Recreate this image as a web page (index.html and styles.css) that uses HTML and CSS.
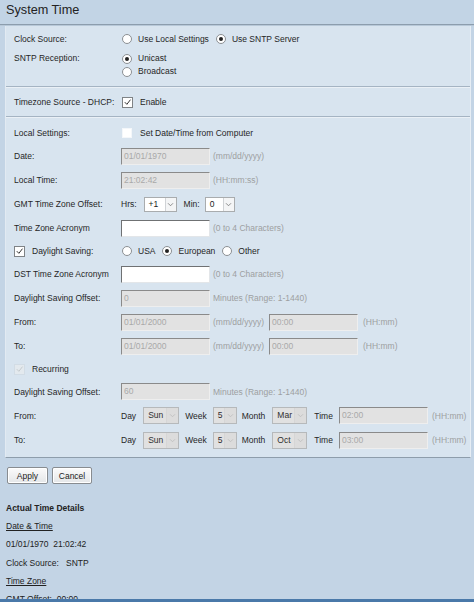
FILE: index.html
```html
<!DOCTYPE html>
<html>
<head>
<meta charset="utf-8">
<title>System Time</title>
<link rel="stylesheet" href="styles.css">
</head>
<body>
<div class="titlebar"><h1 class="title">System Time</h1></div>

<div class="panel">
  <div class="section s1">
    <div class="row h18">
      <div class="label">Clock Source:</div>
      <div class="ctl">
        <span class="opt"><span class="radio"></span>Use Local Settings</span>
        <span class="opt"><span class="radio on"></span>Use SNTP Server</span>
      </div>
    </div>
    <div class="row top">
      <div class="label lh13">SNTP Reception:</div>
      <div class="ctl col">
        <span class="opt lh13"><span class="radio on"></span>Unicast</span>
        <span class="opt lh13"><span class="radio"></span>Broadcast</span>
      </div>
    </div>
  </div>

  <div class="section s2">
    <div class="row h14">
      <div class="label">Timezone Source - DHCP:</div>
      <div class="ctl">
        <span class="opt"><span class="check"><svg viewBox="0 0 10 10" width="10" height="10"><path d="M2 5.2 L4.3 7.6 L8.3 2.4" fill="none" stroke="#333" stroke-width="1.1"/></svg></span>Enable</span>
      </div>
    </div>
  </div>

  <div class="section s3">
    <div class="row h22">
      <div class="label">Local Settings:</div>
      <div class="ctl">
        <span class="opt"><span class="check blank"></span>Set Date/Time from Computer</span>
      </div>
    </div>
    <div class="row h24">
      <div class="label">Date:</div>
      <div class="ctl"><span class="field dis">01/01/1970</span><span class="hint">(mm/dd/yyyy)</span></div>
    </div>
    <div class="row h24">
      <div class="label">Local Time:</div>
      <div class="ctl"><span class="field dis">21:02:42</span><span class="hint">(HH:mm:ss)</span></div>
    </div>
    <div class="row h24">
      <div class="label">GMT Time Zone Offset:</div>
      <div class="ctl">
        <span class="word w7">Hrs:</span>
        <span class="select w-hrs"><span class="val">+1</span><span class="arrow"><svg viewBox="0 0 8 6" width="7" height="5"><path d="M1 1.5 L4 4.5 L7 1.5" fill="none" stroke="#777" stroke-width="1"/></svg></span></span>
        <span class="word ml7">Min:</span>
        <span class="select w-min"><span class="val">0</span><span class="arrow"><svg viewBox="0 0 8 6" width="7" height="5"><path d="M1 1.5 L4 4.5 L7 1.5" fill="none" stroke="#777" stroke-width="1"/></svg></span></span>
      </div>
    </div>
    <div class="row h24">
      <div class="label">Time Zone Acronym</div>
      <div class="ctl"><span class="field"></span><span class="hint">(0 to 4 Characters)</span></div>
    </div>
    <div class="row h22">
      <div class="label lab-check"><span class="check"><svg viewBox="0 0 10 10" width="10" height="10"><path d="M2 5.2 L4.3 7.6 L8.3 2.4" fill="none" stroke="#333" stroke-width="1.1"/></svg></span>Daylight Saving:</div>
      <div class="ctl">
        <span class="opt"><span class="radio"></span>USA</span>
        <span class="opt"><span class="radio on"></span>European</span>
        <span class="opt"><span class="radio"></span>Other</span>
      </div>
    </div>
    <div class="row h24">
      <div class="label">DST Time Zone Acronym</div>
      <div class="ctl"><span class="field"></span><span class="hint">(0 to 4 Characters)</span></div>
    </div>
    <div class="row h24">
      <div class="label">Daylight Saving Offset:</div>
      <div class="ctl"><span class="field dis">0</span><span class="hint">Minutes (Range: 1-1440)</span></div>
    </div>
    <div class="row h24">
      <div class="label">From:</div>
      <div class="ctl"><span class="field dis">01/01/2000</span><span class="hint">(mm/dd/yyyy)</span><span class="field dis ml5">00:00</span><span class="hint ml5">(HH:mm)</span></div>
    </div>
    <div class="row h24">
      <div class="label">To:</div>
      <div class="ctl"><span class="field dis">01/01/2000</span><span class="hint">(mm/dd/yyyy)</span><span class="field dis ml5">00:00</span><span class="hint ml5">(HH:mm)</span></div>
    </div>
    <div class="row h22">
      <div class="label lab-check"><span class="check faded"><svg viewBox="0 0 10 10" width="10" height="10"><path d="M2 5.2 L4.3 7.6 L8.3 2.4" fill="none" stroke="#c4c9cc" stroke-width="1.1"/></svg></span>Recurring</div>
    </div>
    <div class="row h23">
      <div class="label">Daylight Saving Offset:</div>
      <div class="ctl"><span class="field dis">60</span><span class="hint">Minutes (Range: 1-1440)</span></div>
    </div>
    <div class="row h25">
      <div class="label">From:</div>
      <div class="ctl">
        <span class="word w7">Day</span>
        <span class="select dsel w-day"><span class="val">Sun</span><span class="arrow"><svg viewBox="0 0 8 6" width="7" height="5"><path d="M1 1.5 L4 4.5 L7 1.5" fill="none" stroke="#bdbdbd" stroke-width="1"/></svg></span></span>
        <span class="word w6 ml6">Week</span>
        <span class="select dsel w-week"><span class="val">5</span><span class="arrow"><svg viewBox="0 0 8 6" width="7" height="5"><path d="M1 1.5 L4 4.5 L7 1.5" fill="none" stroke="#bdbdbd" stroke-width="1"/></svg></span></span>
        <span class="word w7 ml5">Month</span>
        <span class="select dsel w-month"><span class="val">Mar</span><span class="arrow"><svg viewBox="0 0 8 6" width="7" height="5"><path d="M1 1.5 L4 4.5 L7 1.5" fill="none" stroke="#bdbdbd" stroke-width="1"/></svg></span></span>
        <span class="word w6 ml7">Time</span>
        <span class="field dis">02:00</span><span class="hint ml4">(HH:mm)</span>
      </div>
    </div>
    <div class="row h24">
      <div class="label">To:</div>
      <div class="ctl">
        <span class="word w7">Day</span>
        <span class="select dsel w-day"><span class="val">Sun</span><span class="arrow"><svg viewBox="0 0 8 6" width="7" height="5"><path d="M1 1.5 L4 4.5 L7 1.5" fill="none" stroke="#bdbdbd" stroke-width="1"/></svg></span></span>
        <span class="word w6 ml6">Week</span>
        <span class="select dsel w-week"><span class="val">5</span><span class="arrow"><svg viewBox="0 0 8 6" width="7" height="5"><path d="M1 1.5 L4 4.5 L7 1.5" fill="none" stroke="#bdbdbd" stroke-width="1"/></svg></span></span>
        <span class="word w7 ml5">Month</span>
        <span class="select dsel w-month"><span class="val">Oct</span><span class="arrow"><svg viewBox="0 0 8 6" width="7" height="5"><path d="M1 1.5 L4 4.5 L7 1.5" fill="none" stroke="#bdbdbd" stroke-width="1"/></svg></span></span>
        <span class="word w6 ml7">Time</span>
        <span class="field dis">03:00</span><span class="hint ml4">(HH:mm)</span>
      </div>
    </div>
  </div>
</div>

<div class="buttons">
  <button class="btn w-apply">Apply</button>
  <button class="btn w-cancel">Cancel</button>
</div>

<div class="details">
  <div class="dline bold">Actual Time Details</div>
  <div class="dline u">Date &amp; Time</div>
  <div class="dline">01/01/1970&nbsp;&nbsp;21:02:42</div>
  <div class="dline">Clock Source:&nbsp;&nbsp;&nbsp;SNTP</div>
  <div class="dline u">Time Zone</div>
  <div class="dline">GMT Offset:&nbsp;&nbsp;00:00</div>
</div>

<div class="bottombar"></div>
</body>
</html>
```

FILE: styles.css
```css
html, body {
  margin: 0;
  padding: 0;
}
body {
  background: #c3d4e5;
  font-family: "Liberation Sans", Arial, sans-serif;
  font-size: 8.5px;
  color: #262626;
  height: 602px;
  overflow: hidden;
}
.titlebar {
  height: 24px;
  border-bottom: 1px solid #8c9dad;
  box-shadow: 0 1px 0 #b7c8d8;
  background: #c2d4e5;
}
.title {
  margin: 0;
  padding-left: 6px;
  font-size: 12.7px;
  font-weight: normal;
  line-height: 21px;
  color: #222;
}
.panel {
  margin: 1px 3px 0 5px;
  background: #d8e4ef;
  border-left: 1px solid #e2eaf2;
  border-right: 1px solid #e6edf4;
  border-bottom: 1px solid #8e9dab;
}
.section {
  padding-left: 8px;
  padding-right: 4px;
}
.s1 {
  padding-top: 4px;
  padding-bottom: 8px;
  border-bottom: 1px solid #a5b4c3;
}
.s2 {
  padding-top: 7px;
  padding-bottom: 7px;
  border-top: 1px solid #eaf0f6;
  border-bottom: 1px solid #a5b4c3;
}
.s3 {
  padding-top: 4px;
  padding-bottom: 5px;
  border-top: 1px solid #eaf0f6;
}
.row {
  display: flex;
  align-items: center;
}
.row.top {
  align-items: flex-start;
  margin-top: 4px;
}
.h14 { height: 14px; }
.h18 { height: 18px; }
.h22 { height: 22px; }
.h23 { height: 23px; }
.h24 { height: 24px; }
.h25 { height: 25px; }
.lh13 { line-height: 13px; height: 13px; }
.label {
  width: 107px;
  flex: none;
  white-space: nowrap;
  display: flex;
  align-items: center;
}
.lab-check .check {
  margin-left: 0;
  margin-right: 7px;
}
.ctl {
  display: flex;
  align-items: center;
  white-space: nowrap;
}
.ctl.col {
  flex-direction: column;
  align-items: flex-start;
}
.opt {
  display: inline-flex;
  align-items: center;
  margin-right: 6px;
}
.radio {
  width: 8px;
  height: 8px;
  border: 1px solid #8b8f93;
  border-radius: 50%;
  background: #fff;
  margin-left: 1px;
  margin-right: 6px;
  position: relative;
  flex: none;
}
.radio.on::after {
  content: "";
  position: absolute;
  left: 2px;
  top: 2px;
  width: 4px;
  height: 4px;
  border-radius: 50%;
  background: #222;
}
.check {
  width: 9px;
  height: 9px;
  border: 1px solid #7f8386;
  background: #fff;
  margin-left: 1px;
  margin-right: 7px;
  display: inline-flex;
  align-items: center;
  justify-content: center;
  flex: none;
  overflow: hidden;
}
.check svg { display: block; }
.check.blank {
  border-color: #f4f7fa;
  background: #fff;
  width: 8px;
  height: 8px;
  margin-right: 8px;
}
.check.faded {
  border-color: #d2dce5;
  background: #e3e9ee;
}
.field {
  box-sizing: border-box;
  width: 89px;
  height: 17px;
  background: #fff;
  border-top: 1px solid #6f7173;
  border-left: 1px solid #6f7173;
  border-right: 1px solid #e3e6e9;
  border-bottom: 1px solid #e3e6e9;
  padding-left: 2px;
  line-height: 15px;
  color: #a9a9a9;
  flex: none;
}
.field.dis {
  background: #e2e2e2;
  border-top-color: #8a8a8a;
  border-left-color: #8a8a8a;
  border-right-color: #eeeeee;
  border-bottom-color: #eeeeee;
}
.hint {
  color: #9d9fa1;
  margin-left: 3px;
}
.hint.ml4 { margin-left: 4px; }
.hint.ml5 { margin-left: 5px; }
.ml5 { margin-left: 5px; }
.ml6 { margin-left: 6px; }
.ml7 { margin-left: 7px; }
.ml8 { margin-left: 8px; }
.word {
  margin-right: 5px;
}
.word.w6 { margin-right: 6px; }
.word.w7 { margin-right: 7px; }
.select {
  box-sizing: border-box;
  height: 15px;
  display: inline-flex;
  align-items: stretch;
  background: #fff;
  border: 1px solid #a9acae;
  flex: none;
}
.select .val {
  flex: 1;
  padding-left: 4px;
  line-height: 13px;
  color: #222;
}
.select .arrow {
  width: 10px;
  border-left: 1px solid #d0d3d6;
  background: #f4f5f6;
  display: flex;
  align-items: center;
  justify-content: center;
}
.select.dsel {
  height: 17px;
  background: #e1e1e1;
  border-color: #b6b9bb;
}
.select.dsel .val { line-height: 15px; color: #2f2f2f; }
.select.dsel .arrow {
  background: #dcdcdc;
  border-left-color: #d6d6d6;
  width: 11px;
}
.w-hrs { width: 33px; }
.w-min { width: 30px; }
.w-day { width: 36px; }
.w-week { width: 24px; }
.w-month { width: 35px; }
.buttons {
  display: flex;
  gap: 4px;
  padding: 9px 0 0 7px;
}
.btn {
  box-sizing: border-box;
  height: 17px;
  padding: 0;
  font-family: "Liberation Sans", Arial, sans-serif;
  font-size: 8.5px;
  color: #222;
  border: 1px solid #888c90;
  border-radius: 2px;
  background: linear-gradient(#fbfbfb, #e4e6e8);
  box-shadow: inset 0 0 0 1px #fff;
}
.w-apply { width: 41px; }
.w-cancel { width: 40px; }
.details {
  padding: 15px 0 0 6px;
}
.dline {
  height: 18.2px;
  line-height: 18px;
  color: #222;
}
.bold { font-weight: bold; }
.u { text-decoration: underline; }
.bottombar {
  position: fixed;
  left: 0;
  right: 0;
  bottom: 0;
  height: 3px;
  background: #4a79a9;
}
```
